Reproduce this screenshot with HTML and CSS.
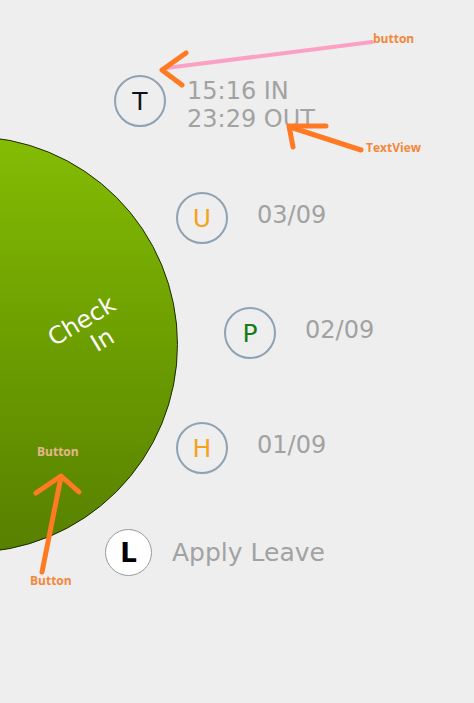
FILE: index.html
```html
<!DOCTYPE html>
<html>
<head>
<meta charset="utf-8">
<link rel="stylesheet" href="styles.css">
</head>
<body>
<div class="stage">
  <button class="check"><span class="check-label">Check<br><span class="check-in">In</span></span></button>
  <div class="list">
    <div class="row row-t">
      <span class="badge">T</span>
      <div class="times"><div>15:16 IN</div><div>23:29 OUT</div></div>
    </div>
    <div class="row row-u">
      <span class="badge orange">U</span>
      <span class="date">03/09</span>
    </div>
    <div class="row row-p">
      <span class="badge green">P</span>
      <span class="date">02/09</span>
    </div>
    <div class="row row-h">
      <span class="badge orange">H</span>
      <span class="date">01/09</span>
    </div>
    <div class="row row-l">
      <span class="badge leave">L</span>
      <span class="apply">Apply Leave</span>
    </div>
  </div>
  <svg class="notes" width="474" height="703" viewBox="0 0 474 703">
    <line x1="372" y1="42" x2="166" y2="68" stroke="#fba2c4" stroke-width="4" stroke-linecap="round"/>
    <polyline points="186,53 162,70 182,85" fill="none" stroke="#ff7a22" stroke-width="5" stroke-linecap="round" stroke-linejoin="round"/>
    <text x="373" y="43" class="note">button</text>
    <polyline points="326,126 289,126 293,147" fill="none" stroke="#ff7a22" stroke-width="5" stroke-linecap="round" stroke-linejoin="round"/>
    <line x1="290" y1="127" x2="361" y2="150" stroke="#ff7a22" stroke-width="5" stroke-linecap="round"/>
    <text x="366" y="152" class="note">TextView</text>
    <text x="37" y="456" class="note light">Button</text>
    <polyline points="36,493 61,476 79,492" fill="none" stroke="#ff7a22" stroke-width="5" stroke-linecap="round" stroke-linejoin="round"/>
    <line x1="61" y1="477" x2="42" y2="572" stroke="#ff7a22" stroke-width="5" stroke-linecap="round"/>
    <text x="30" y="585" class="note">Button</text>
  </svg>
</div>
</body>
</html>
```
FILE: styles.css
```css
html, body {
  margin: 0;
  padding: 0;
}
body {
  background: #eeeeee;
  width: 474px;
  height: 703px;
  overflow: hidden;
  font-family: "DejaVu Sans", Verdana, sans-serif;
}
.stage {
  position: relative;
  display: grid;
  grid-template-columns: 474px;
  grid-template-rows: 703px;
  overflow: hidden;
}
.check {
  grid-area: 1 / 1;
  align-self: start;
  justify-self: start;
  margin: 136px 0 0 -239px;
  width: 417px;
  height: 417px;
  border-radius: 50%;
  border: 1px solid #1c2a04;
  background: linear-gradient(to bottom, #84bc04 0%, #6c9e00 50%, #578000 100%);
  display: flex;
  align-items: center;
  justify-content: center;
  padding: 0 0 24px 238px;
  box-sizing: border-box;
  font: inherit;
  cursor: pointer;
}
.check-label {
  display: block;
  color: #ffffff;
  font-family: "DejaVu Sans", Verdana, sans-serif;
  font-size: 24px;
  line-height: 27px;
  text-align: center;
  transform: rotate(-31deg);
}
.check-in {
  padding-left: 16px;
}
.list {
  grid-area: 1 / 1;
  display: flex;
  flex-direction: column;
}
.row {
  display: flex;
  align-items: flex-start;
}
.badge {
  flex: none;
  width: 52px;
  height: 52px;
  box-sizing: border-box;
  border: 2px solid #8fa2b3;
  border-radius: 50%;
  display: flex;
  align-items: center;
  justify-content: center;
  font-size: 25px;
  color: #111111;
}
.badge.orange { color: #f5a21c; }
.badge.green { color: #187a18; }
.badge.leave {
  width: 47px;
  height: 47px;
  border: 1px solid #9a9a9a;
  background: #ffffff;
  font-size: 26px;
  color: #000000;
  font-weight: bold;
}
.times, .date, .apply {
  color: #a2a2a2;
  font-size: 24px;
  line-height: 28px;
}
.row-t { margin-top: 75px; padding-left: 114px; gap: 21px; }
.row-t .times { margin-top: 2px; }
.row-u { margin-top: 59px; padding-left: 176px; gap: 29px; }
.row-p { margin-top: 63px; padding-left: 224px; gap: 29px; }
.row-h { margin-top: 63px; padding-left: 176px; gap: 29px; }
.date { margin-top: 9px; }
.row-l { margin-top: 55px; padding-left: 105px; gap: 20px; align-items: center; }
.apply { font-size: 25px; }
.notes {
  position: absolute;
  left: 0;
  top: 0;
  pointer-events: none;
}
.note {
  font-family: "Open Sans", sans-serif;
  font-weight: bold;
  font-size: 12px;
  fill: #f4873a;
}
.note.light { fill: #e6b68c; }
```
